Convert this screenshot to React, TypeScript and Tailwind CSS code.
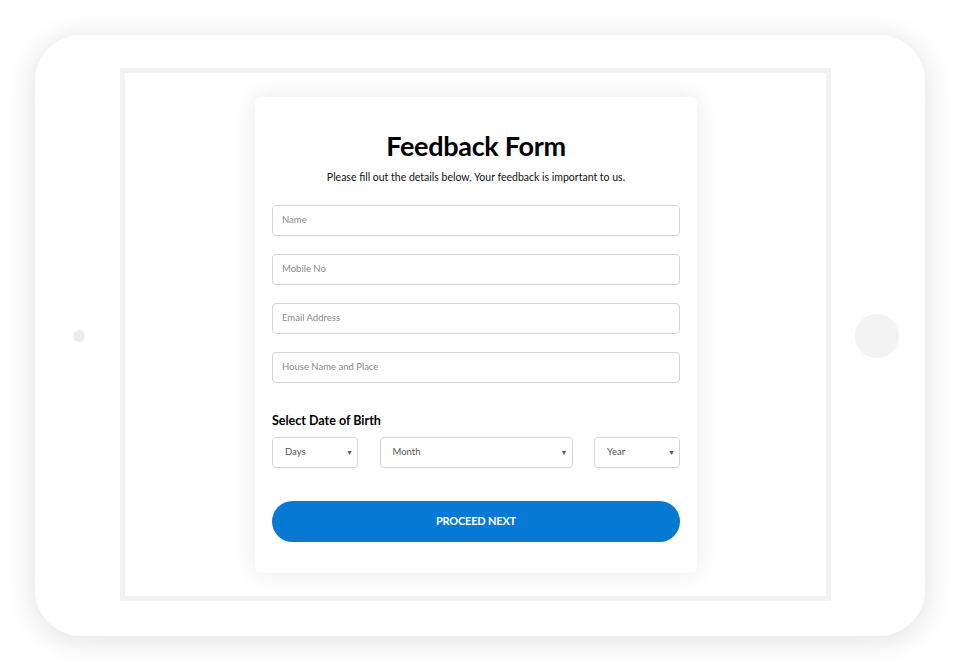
import React from "react"

const fields = ["Name", "Mobile No", "Email Address", "House Name and Place"]

function Arrow() {
  return <span className="text-[7px] text-[#555]">▼</span>
}

export default function App() {
  return (
    <div className="w-[960px] h-[670px] bg-white flex items-start pt-[35px] pl-[35px] font-['Lato',sans-serif] overflow-hidden">
      <div className="w-[890px] h-[601px] bg-white rounded-[46px] shadow-[0_4px_30px_rgba(0,0,0,0.13)] flex items-center">
        <div className="w-[85px] flex justify-center">
          <div className="w-[12px] h-[12px] rounded-full bg-[#ececec] ml-[3px]"></div>
        </div>
        <div className="w-[711px] h-[533px] border-[5px] border-[#f1f1f1] bg-white flex justify-center pt-[24px] mt-[-2px]">
          <div className="w-[442px] h-[476px] ml-[1px] bg-white rounded-[6px] shadow-[0_0_24px_rgba(0,0,0,0.09)] px-[17px] pt-[31px]">
            <h1 className="text-center text-[27px] font-bold text-black leading-[36px] tracking-[-0.3px]">Feedback Form</h1>
            <p className="text-center text-[10.5px] text-[#111] mt-[6px] leading-[14px]">
              Please fill out the details below, Your feedback is important to us.
            </p>
            <div className="flex flex-col gap-[18px] mt-[21px]">
              {fields.map((f) => (
                <div key={f} className="h-[31px] border border-[#d6d6d6] rounded-[4px] flex items-center px-[9px] text-[9.5px] text-[#8a8a8a]">
                  {f}
                </div>
              ))}
            </div>
            <div className="mt-[30px] text-[12.5px] font-bold text-black leading-[16px]">Select Date of Birth</div>
            <div className="flex justify-between mt-[8px]">
              <div className="w-[86px] h-[31px] border border-[#d6d6d6] rounded-[4px] flex items-center justify-between pl-[12px] pr-[4px] text-[9.5px] text-[#555]">
                Days <Arrow />
              </div>
              <div className="w-[193px] h-[31px] border border-[#d6d6d6] rounded-[4px] flex items-center justify-between pl-[12px] pr-[4px] text-[9.5px] text-[#555]">
                Month <Arrow />
              </div>
              <div className="w-[86px] h-[31px] border border-[#d6d6d6] rounded-[4px] flex items-center justify-between pl-[12px] pr-[4px] text-[9.5px] text-[#555]">
                Year <Arrow />
              </div>
            </div>
            <button className="mt-[33px] w-full h-[41px] rounded-full bg-[#0679d5] text-white text-[11px] font-bold tracking-[-0.2px]">
              PROCEED NEXT
            </button>
          </div>
        </div>
        <div className="flex-1 flex justify-center">
          <div className="w-[44px] h-[44px] rounded-full bg-[#f3f3f3] mr-[3px]"></div>
        </div>
      </div>
    </div>
  )
}
